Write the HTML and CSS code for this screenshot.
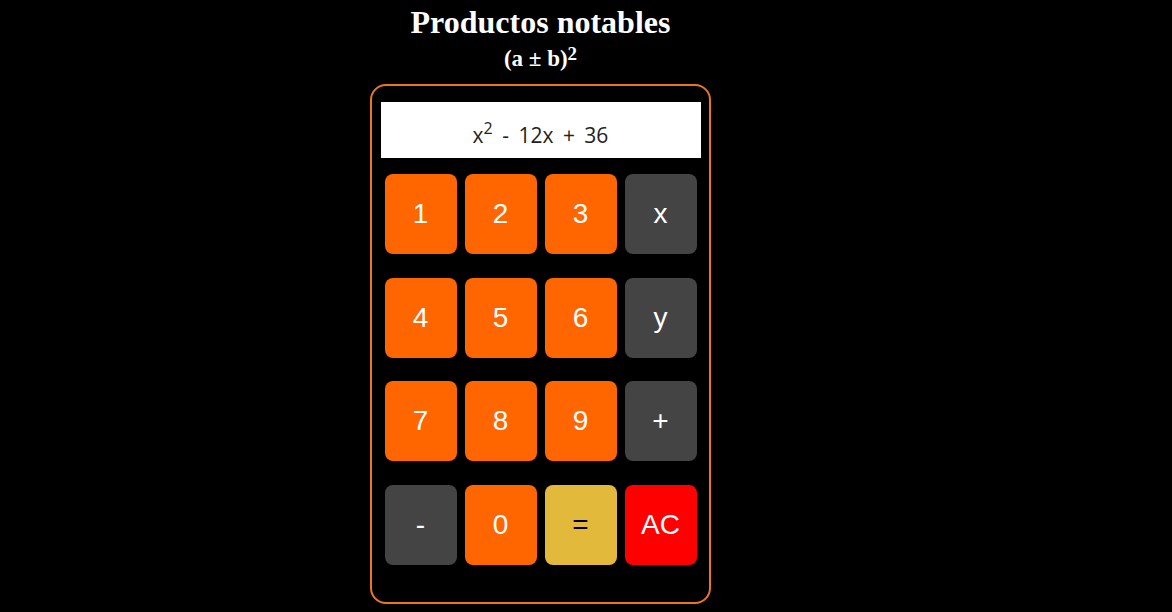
FILE: index.html
```html
<!DOCTYPE html>
<html lang="es">
<head>
<meta charset="utf-8">
<title>Productos notables</title>
<link rel="stylesheet" href="styles.css">
</head>
<body>
<main class="page">
  <h1 class="title">Productos notables</h1>
  <h2 class="subtitle">(a ± b)<sup>2</sup></h2>
  <section class="calc">
    <div class="display"><span class="expr">x<sup>2</sup> - 12x + 36</span></div>
    <div class="keys">
      <button class="key num">1</button>
      <button class="key num">2</button>
      <button class="key num">3</button>
      <button class="key op">x</button>
      <button class="key num">4</button>
      <button class="key num">5</button>
      <button class="key num">6</button>
      <button class="key op">y</button>
      <button class="key num">7</button>
      <button class="key num">8</button>
      <button class="key num">9</button>
      <button class="key op">+</button>
      <button class="key op">-</button>
      <button class="key num">0</button>
      <button class="key eq">=</button>
      <button class="key ac">AC</button>
    </div>
  </section>
</main>
</body>
</html>
```
FILE: styles.css
```css
html, body {
  margin: 0;
  padding: 0;
  background: #000;
}
.page {
  width: 1081px;
  display: flex;
  flex-direction: column;
  align-items: center;
  font-family: "Liberation Serif", "Times New Roman", serif;
  color: #fff;
}
.title {
  margin: 4px 0 0;
  font-size: 32px;
  line-height: 36px;
  font-weight: bold;
}
.subtitle {
  margin: 6px 0 0;
  font-size: 23px;
  line-height: 26px;
  font-weight: bold;
}
.subtitle sup {
  font-size: 19px;
  line-height: 0;
  vertical-align: 6px;
}
.calc {
  margin-top: 12px;
  width: 337px;
  height: 500px;
  border: 2px solid #ec7620;
  border-radius: 16px;
  display: flex;
  flex-direction: column;
  align-items: center;
  padding-top: 16px;
  box-sizing: content-box;
}
.display {
  width: 320px;
  height: 56px;
  background: #fff;
  color: #222;
  font-family: "Open Sans", sans-serif;
  font-size: 21px;
  word-spacing: 4px;
  display: flex;
  align-items: center;
  justify-content: center;
  padding-top: 9px;
  box-sizing: border-box;
}
.display sup {
  font-size: 16px;
  line-height: 0;
  vertical-align: 9px;
}
.keys {
  margin-top: 16px;
  display: grid;
  grid-template-columns: repeat(4, 72px);
  grid-auto-rows: 80px;
  column-gap: 8px;
  row-gap: 23.5px;
}
.key {
  border: none;
  border-radius: 8px;
  font-family: "Liberation Sans", Arial, sans-serif;
  font-size: 28px;
  color: #fff;
  padding: 0;
}
.num { background: #ff6600; }
.op { background: #444444; }
.eq { background: #e3b93c; color: #000; }
.ac { background: #ff0000; }
```
